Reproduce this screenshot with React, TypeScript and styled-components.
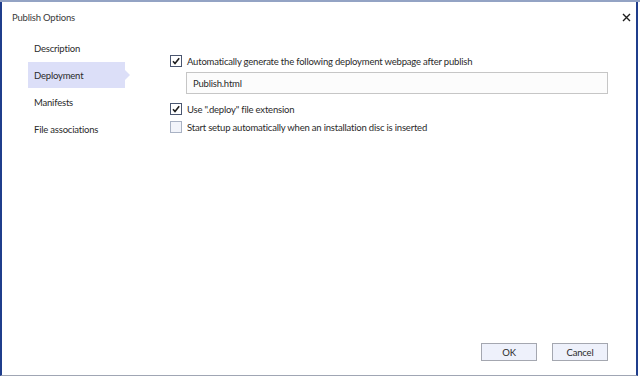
import React, { useState } from "react";
import styled, { createGlobalStyle } from "styled-components";

const GlobalStyle = createGlobalStyle`
    html, body {
        margin: 0;
        padding: 0;
        background: #ffffff;
    }
    body {
        font-family: Lato, "Noto Sans", sans-serif;
        font-size: 9.5px;
        letter-spacing: -0.2px;
        color: #2a2a2a;
    }
    button, input {
        font-family: inherit;
        font-size: inherit;
        letter-spacing: inherit;
    }
`;

const Screen = styled.div`
    width: 640px;
    height: 376px;
    display: flex;
    flex-direction: column;
    overflow: hidden;
`;

const TopStrip = styled.div`
    height: 2px;
    background: #93a3c4;
    flex: none;
`;

const Dialog = styled.div`
    flex: 1;
    width: 638px;
    box-sizing: border-box;
    border-left: 2px solid #1f3d8c;
    border-right: 2px solid #1f3d8c;
    border-bottom: 1px solid #a0a6b4;
    display: flex;
    flex-direction: column;
    background: #ffffff;
`;

const TitleBar = styled.div`
    height: 31px;
    display: flex;
    align-items: center;
    justify-content: space-between;
    padding: 0 2px 0 10px;
`;

const Title = styled.div`
    color: #3a3a3a;
`;

const CloseButton = styled.button`
    border: none;
    background: transparent;
    padding: 0;
    width: 16px;
    height: 16px;
    display: flex;
    align-items: center;
    justify-content: center;
    cursor: pointer;
`;

const Body = styled.div`
    flex: 1;
    display: flex;
    padding-top: 2px;
`;

const Sidebar = styled.nav`
    width: 126px;
    padding-left: 26px;
    display: flex;
    flex-direction: column;
    flex: none;
`;

const NavItem = styled.div<{ $active?: boolean }>`
    position: relative;
    height: 26px;
    margin-bottom: 1px;
    display: flex;
    align-items: center;
    padding-left: 6px;
    background: ${(p) => (p.$active ? "#dcdff8" : "transparent")};
    width: 97px;
    box-sizing: border-box;

    &::after {
        content: "";
        display: ${(p) => (p.$active ? "block" : "none")};
        position: absolute;
        right: -5px;
        top: 8px;
        border-top: 5px solid transparent;
        border-bottom: 5px solid transparent;
        border-left: 5px solid #dcdff8;
    }
`;

const Content = styled.div`
    flex: 1;
    padding-top: 17px;
    padding-left: 16px;
    padding-right: 28px;
    display: flex;
    flex-direction: column;
`;

const OptionRow = styled.label`
    display: flex;
    align-items: center;
    gap: 5px;
    height: 18px;
`;

const Box = styled.span<{ $checked: boolean }>`
    width: 12px;
    height: 12px;
    box-sizing: border-box;
    border: 1px solid ${(p) => (p.$checked ? "#4a5670" : "#a9b2c4")};
    background: ${(p) => (p.$checked ? "#ffffff" : "#f2f4fa")};
    display: flex;
    align-items: center;
    justify-content: center;
    flex: none;
`;

const PathInput = styled.input`
    margin: 2px 0 6px 16px;
    height: 22px;
    box-sizing: border-box;
    border: 1px solid #c6c6c6;
    background: #fcfcfc;
    color: #2a2a2a;
    padding: 0 6px;
    outline: none;
`;

const Footer = styled.div`
    display: flex;
    justify-content: flex-end;
    gap: 15px;
    padding: 0 28px 14px 0;
`;

const DialogButton = styled.button`
    width: 56px;
    height: 18px;
    box-sizing: border-box;
    border: 1px solid #a4a7b0;
    background: #eef1fb;
    color: #2a2a2a;
    padding: 0;
`;

const Check = ({ on }: { on: boolean }) => (
    <svg width="10" height="10" viewBox="0 0 10 10">
        {on && <path d="M2 5.2 L4 7.5 L8.2 2.2" fill="none" stroke="#1e1e1e" strokeWidth="1.6" />}
    </svg>
);

const CheckOption = ({ label, checked, onToggle }: { label: string; checked: boolean; onToggle: () => void }) => (
    <OptionRow onClick={onToggle}>
        <Box $checked={checked}>
            <Check on={checked} />
        </Box>
        {label}
    </OptionRow>
);

const navItems = ["Description", "Deployment", "Manifests", "File associations"];

const App = () => {
    const [active, setActive] = useState("Deployment");
    const [genPage, setGenPage] = useState(true);
    const [useDeploy, setUseDeploy] = useState(true);
    const [autoStart, setAutoStart] = useState(false);

    return (
        <>
            <GlobalStyle />
            <Screen>
                <TopStrip />
                <Dialog>
                    <TitleBar>
                        <Title>Publish Options</Title>
                        <CloseButton>
                            <svg width="9" height="9" viewBox="0 0 9 9">
                                <path d="M1 1 L8 8 M8 1 L1 8" stroke="#1e1e1e" strokeWidth="1.4" />
                            </svg>
                        </CloseButton>
                    </TitleBar>
                    <Body>
                        <Sidebar>
                            {navItems.map((item) => (
                                <NavItem key={item} $active={item === active} onClick={() => setActive(item)}>
                                    {item}
                                </NavItem>
                            ))}
                        </Sidebar>
                        <Content>
                            <CheckOption
                                label="Automatically generate the following deployment webpage after publish"
                                checked={genPage}
                                onToggle={() => setGenPage(!genPage)}
                            />
                            <PathInput defaultValue="Publish.html" />
                            <CheckOption
                                label={'Use ".deploy" file extension'}
                                checked={useDeploy}
                                onToggle={() => setUseDeploy(!useDeploy)}
                            />
                            <CheckOption
                                label="Start setup automatically when an installation disc is inserted"
                                checked={autoStart}
                                onToggle={() => setAutoStart(!autoStart)}
                            />
                        </Content>
                    </Body>
                    <Footer>
                        <DialogButton>OK</DialogButton>
                        <DialogButton>Cancel</DialogButton>
                    </Footer>
                </Dialog>
            </Screen>
        </>
    );
};

export default App;
